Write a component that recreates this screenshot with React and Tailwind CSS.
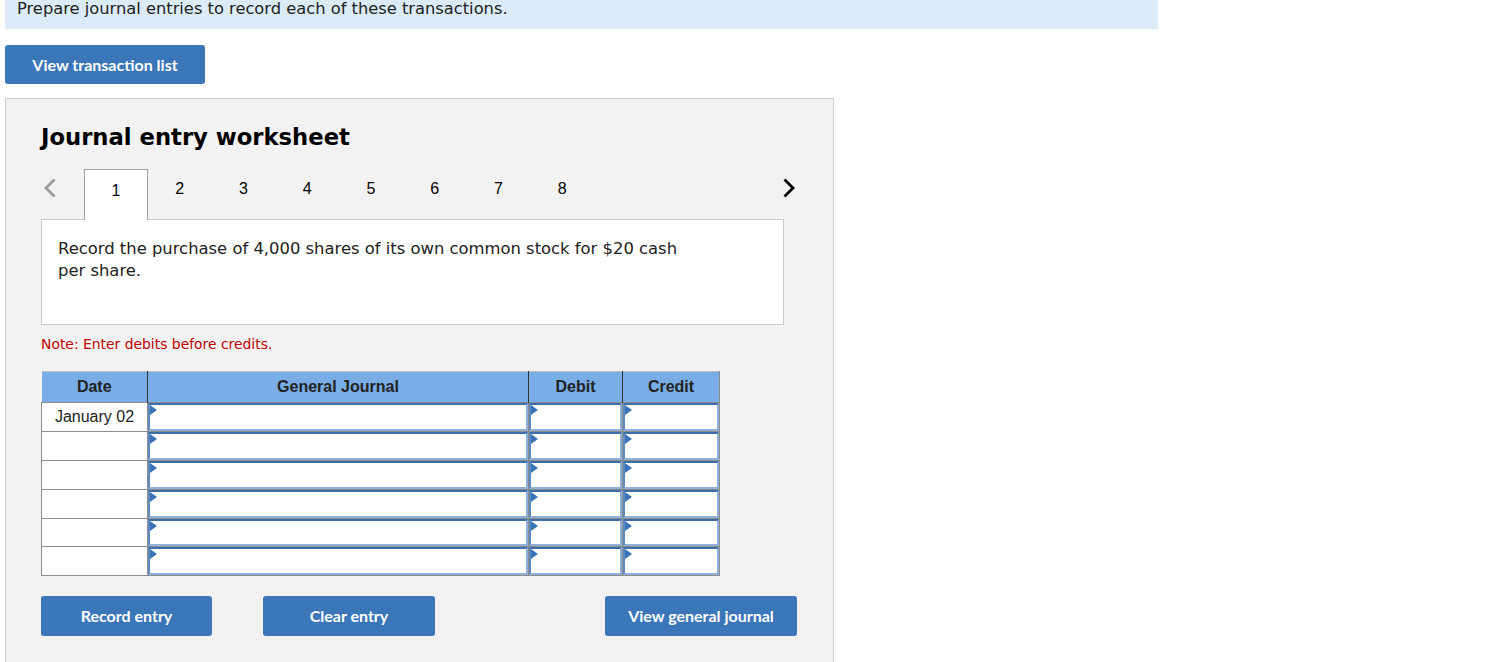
const verdana = { fontFamily: '"DejaVu Sans", Verdana, sans-serif' };

function Chevron({ dir, color }) {
  return (
    <svg width="14" height="20" viewBox="0 0 14 20" fill="none" className="block">
      <path
        d={dir === "left" ? "M11.5 1.5 L3 10 L11.5 18.5" : "M2.5 1.5 L11 10 L2.5 18.5"}
        stroke={color}
        strokeWidth="2.8"
      />
    </svg>
  );
}

function Cell() {
  return (
    <td className="p-0 border border-[#8c8c8c]">
      <div className="relative h-[27.9px] bg-white border-2 border-[#8fb0d8] border-t-[#3d6ea8] border-l-[#5f8ac0]">
        <span className="absolute left-0 top-0 w-0 h-0 border-t-[5px] border-b-[5px] border-l-[7px] border-t-transparent border-b-transparent border-l-[#3a74b8]" />
      </div>
    </td>
  );
}

function BlueButton({ children, className = "" }) {
  return (
    <button
      className={`rounded-[3px] bg-[#3b76b9] text-white font-bold text-[16px] font-['Lato',sans-serif] ${className}`}
    >
      {children}
    </button>
  );
}

export default function App() {
  const tabs = [1, 2, 3, 4, 5, 6, 7, 8];
  const rows = ["January 02", "", "", "", "", ""];

  return (
    <div className="w-[1485px] h-[662px] overflow-hidden bg-white pl-[5px]">
      <div className="w-[1153px] h-[29px] bg-[#dbecf8] px-[12px]">
        <p className="text-[16.3px] leading-[18px] text-[#222]" style={verdana}>
          Prepare journal entries to record each of these transactions.
        </p>
      </div>

      <BlueButton className="mt-[16px] w-[200px] h-[39px]">View transaction list</BlueButton>

      <div className="mt-[14px] w-[829px] h-[600px] border border-[#cfcfcf] bg-[#f2f2f2] pl-[35px] pt-[24px]">
        <h2 className="text-[22.7px] leading-[28px] font-bold text-black" style={verdana}>
          Journal entry worksheet
        </h2>

        <div className="mt-[17px] flex items-end w-[743px] h-[51px] font-['Liberation_Sans',Arial,sans-serif] text-[16px] text-black">
          <div className="w-[43px] h-full flex items-start pt-[10px] pl-[2px]">
            <Chevron dir="left" color="#9a9a9a" />
          </div>
          {tabs.map((t) => (
            <div
              key={t}
              className={`w-[63.75px] h-full pt-[10px] leading-[22px] text-center ${
                t === 1 ? "bg-white border border-b-0 border-[#a0a0a0] relative z-10 -mb-px h-[52px]" : ""
              }`}
            >
              {t}
            </div>
          ))}
          <div className="flex-1 h-full flex items-start justify-end pt-[10px] mr-[-12px]">
            <Chevron dir="right" color="#000" />
          </div>
        </div>

        <div className="w-[743px] h-[106px] bg-white border border-[#cccccc] px-[16px] pt-[18px]">
          <p className="w-[650px] text-[16.4px] leading-[22px] text-[#222]" style={verdana}>
            Record the purchase of 4,000 shares of its own common stock for $20 cash per share.
          </p>
        </div>

        <p className="mt-[10px] text-[13.9px] leading-[18px] text-[#c00000]" style={verdana}>
          Note: Enter debits before credits.
        </p>

        <table className="mt-[18px] border-collapse font-['Liberation_Sans',Arial,sans-serif] text-[16px] text-[#222]">
          <thead>
            <tr className="h-[31px] bg-[#78ade5]">
              <th className="w-[106px] p-0 border-t border-[#c0c0c0] border-r border-r-[#333] font-bold">Date</th>
              <th className="w-[381px] p-0 border-t border-[#c0c0c0] border-r border-r-[#333] font-bold">General Journal</th>
              <th className="w-[94px] p-0 border-t border-[#c0c0c0] border-r border-r-[#333] font-bold">Debit</th>
              <th className="w-[97px] p-0 border-t border-[#c0c0c0] border-r border-r-[#888] font-bold">Credit</th>
            </tr>
          </thead>
          <tbody>
            {rows.map((d, i) => (
              <tr key={i}>
                <td className="p-0 border border-[#8c8c8c] bg-white text-center leading-[27px]">{d}</td>
                <Cell />
                <Cell />
                <Cell />
              </tr>
            ))}
          </tbody>
        </table>

        <div className="mt-[20px] flex">
          <BlueButton className="w-[171px] h-[40px]">Record entry</BlueButton>
          <BlueButton className="ml-[51px] w-[172px] h-[40px]">Clear entry</BlueButton>
          <BlueButton className="ml-[170px] w-[192px] h-[40px]">View general journal</BlueButton>
        </div>
      </div>
    </div>
  );
}
